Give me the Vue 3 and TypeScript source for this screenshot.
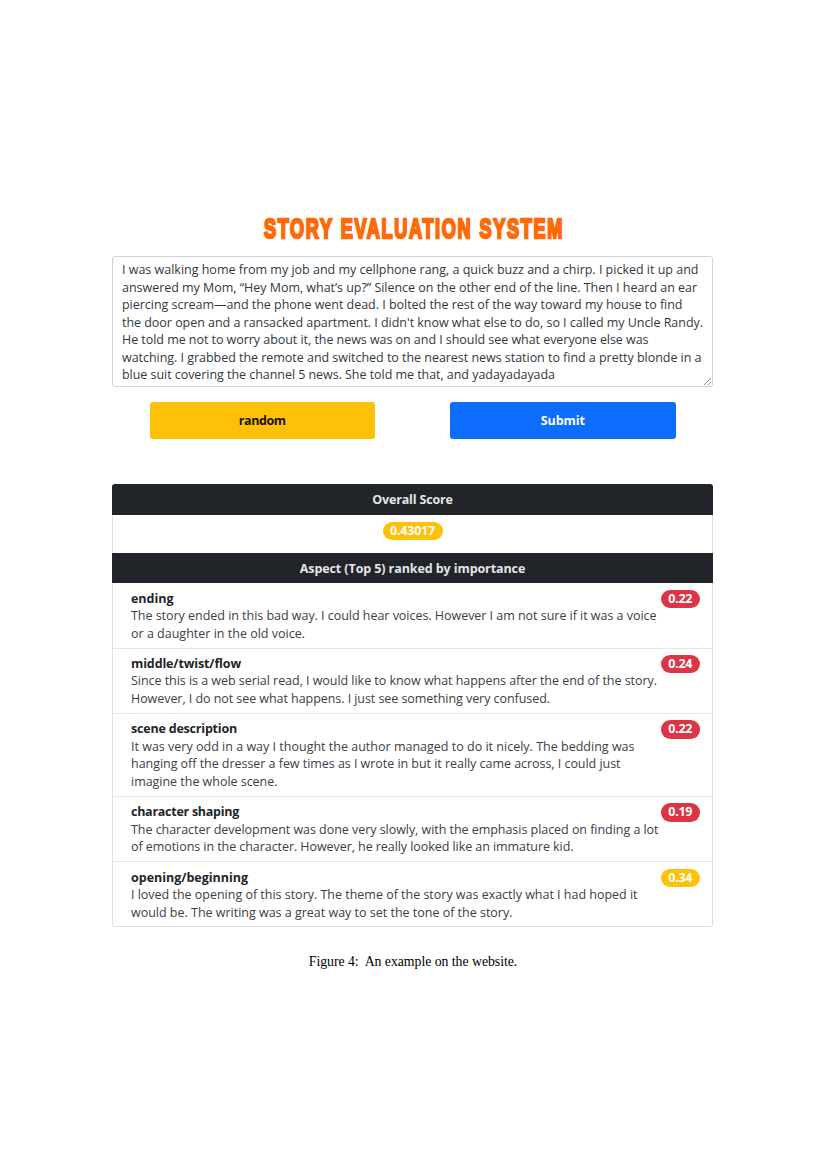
<template>
  <main class="page">
    <svg class="title" width="304" height="30" viewBox="0 0 304 30">
      <text x="3" y="24" textLength="300" lengthAdjust="spacingAndGlyphs">STORY EVALUATION SYSTEM</text>
    </svg>

    <div class="story">
      <div v-for="line in story" :key="line.text" class="line">
        <span v-fit="line.width">{{ line.text }}</span>
      </div>
      <svg class="grip" width="9" height="9" viewBox="0 0 9 9">
        <path d="M1 8L8 1M5 8L8 5" />
      </svg>
    </div>

    <div class="actions">
      <button class="btn btn-warning"><span v-fit="47">random</span></button>
      <button class="btn btn-primary"><span v-fit="44">Submit</span></button>
    </div>

    <section class="results">
      <div class="head"><span v-fit="80.5">Overall Score</span></div>
      <div class="overall">
        <span class="badge badge-wide warning"><span v-fit="45">0.43017</span></span>
      </div>
      <div class="head"><span v-fit="225.5">Aspect (Top 5) ranked by importance</span></div>
      <div v-for="aspect in aspects" :key="aspect.name" class="aspect">
        <div class="body">
          <div class="line name"><span v-fit="aspect.width">{{ aspect.name }}</span></div>
          <div v-for="line in aspect.lines" :key="line.text" class="line">
            <span v-fit="line.width">{{ line.text }}</span>
          </div>
        </div>
        <span class="badge" :class="aspect.level"><span v-fit="24">{{ aspect.score }}</span></span>
      </div>
    </section>

    <p class="caption"><span v-fit="208.5">Figure 4:&nbsp; An example on the website.</span></p>
  </main>
</template>

<script lang="ts" setup>
interface Line {
  text: string
  width: number
}

interface Aspect {
  name: string
  width: number
  score: string
  level: 'danger' | 'warning'
  lines: Line[]
}

// spreads the letters of a line over the given width
const vFit = {
  mounted(el: HTMLElement, binding: { value: number }) {
    const natural = el.getBoundingClientRect().width
    const count = (el.textContent || '').length
    el.style.letterSpacing = `${(binding.value - natural) / count}px`
  }
}

const story: Line[] = [
  { text: 'I was walking home from my job and my cellphone rang, a quick buzz and a chirp. I picked it up and', width: 576.5 },
  { text: 'answered my Mom, “Hey Mom, what’s up?” Silence on the other end of the line. Then I heard an ear', width: 575 },
  { text: 'piercing scream—and the phone went dead. I bolted the rest of the way toward my house to find', width: 560.5 },
  { text: "the door open and a ransacked apartment. I didn't know what else to do, so I called my Uncle Randy.", width: 581 },
  { text: 'He told me not to worry about it, the news was on and I should see what everyone else was', width: 526.5 },
  { text: 'watching. I grabbed the remote and switched to the nearest news station to find a pretty blonde in a', width: 579.5 },
  { text: 'blue suit covering the channel 5 news. She told me that, and yadayadayada', width: 433 }
]

const aspects: Aspect[] = [
  {
    name: 'ending',
    width: 42.5,
    score: '0.22',
    level: 'danger',
    lines: [
      { text: 'The story ended in this bad way. I could hear voices. However I am not sure if it was a voice', width: 525.5 },
      { text: 'or a daughter in the old voice.', width: 174 }
    ]
  },
  {
    name: 'middle/twist/flow',
    width: 110,
    score: '0.24',
    level: 'danger',
    lines: [
      { text: 'Since this is a web serial read, I would like to know what happens after the end of the story.', width: 526 },
      { text: 'However, I do not see what happens. I just see something very confused.', width: 419 }
    ]
  },
  {
    name: 'scene description',
    width: 106,
    score: '0.22',
    level: 'danger',
    lines: [
      { text: 'It was very odd in a way I thought the author managed to do it nicely. The bedding was', width: 503.5 },
      { text: 'hanging off the dresser a few times as I wrote in but it really came across, I could just', width: 489.5 },
      { text: 'imagine the whole scene.', width: 146.5 }
    ]
  },
  {
    name: 'character shaping',
    width: 108,
    score: '0.19',
    level: 'danger',
    lines: [
      { text: 'The character development was done very slowly, with the emphasis placed on finding a lot', width: 527.5 },
      { text: 'of emotions in the character. However, he really looked like an immature kid.', width: 442.5 }
    ]
  },
  {
    name: 'opening/beginning',
    width: 117,
    score: '0.34',
    level: 'warning',
    lines: [
      { text: 'I loved the opening of this story. The theme of the story was exactly what I had hoped it', width: 506.5 },
      { text: 'would be. The writing was a great way to set the tone of the story.', width: 381.5 }
    ]
  }
]
</script>

<style>
body {
  background: #fff;
}
</style>

<style scoped>
.page {
  box-sizing: border-box;
  width: 827px;
  height: 1169px;
  padding: 214px 114px 0 112px;
  overflow: hidden;
  color: #33383d;
  font-family: 'Open Sans', 'Noto Sans', sans-serif;
  font-size: 12.5px;
  line-height: 17.5px;
}

.title {
  display: block;
  margin: 0 auto;
  overflow: visible;
}

.title text {
  fill: #ff6a07;
  stroke: #ff6a07;
  stroke-width: 2.4px;
  font-family: 'Liberation Sans Narrow', 'Liberation Sans', sans-serif;
  font-size: 27.5px;
  font-weight: 700;
  letter-spacing: 2.5px;
  word-spacing: 1px;
}

.story {
  position: relative;
  box-sizing: border-box;
  height: 131px;
  margin-top: 12px;
  padding: 4px 9px;
  border: 1px solid #ced4da;
  border-radius: 3px;
}

.line {
  height: 17.5px;
  white-space: pre;
}

.grip {
  position: absolute;
  right: 0;
  bottom: 0;
}

.grip path {
  fill: none;
  stroke: #777;
  stroke-width: 0.8;
}

.actions {
  display: flex;
  justify-content: space-between;
  margin-top: 15px;
  padding: 0 37.5px;
}

.btn {
  width: 225.5px;
  height: 37px;
  padding: 0;
  border: 0;
  border-radius: 3px;
  font: inherit;
  font-weight: 700;
}

.btn-warning {
  background: #ffc107;
  color: #15130b;
}

.btn-primary {
  background: #0d6efd;
  color: #fff;
}

.results {
  box-sizing: border-box;
  height: 443px;
  margin-top: 45.3px;
  border: 1px solid #dfdfdf;
  border-top: 0;
  border-radius: 3px;
  color: #3b4045;
}

.head {
  height: 30.5px;
  margin: 0 -1px;
  background: #212529;
  color: #e4e5e6;
  font-weight: 700;
  line-height: 32px;
  text-align: center;
}

.head:first-child {
  border-radius: 3px 3px 0 0;
}

.overall {
  display: flex;
  justify-content: center;
  box-sizing: border-box;
  height: 38px;
  padding-top: 7px;
}

.aspect {
  display: flex;
  justify-content: space-between;
  box-sizing: border-box;
  padding: 6.3px 12px 5.6px 18px;
  border-bottom: 1px solid #e6e6e6;
}

.aspect:last-child {
  border-bottom: 0;
}

.body {
  width: 530px;
}

.name {
  color: #212529;
  font-weight: 700;
}

.badge {
  flex: none;
  width: 39.5px;
  height: 18.5px;
  border-radius: 9.25px;
  color: #fff;
  font-weight: 700;
  line-height: 18.5px;
  text-align: center;
}

.badge-wide {
  width: 60px;
}

.danger {
  background: #dc3545;
}

.warning {
  background: #ffc107;
}

.caption {
  margin: 26px 0 0 1px;
  color: #000;
  font-family: 'Liberation Serif', serif;
  font-size: 13.8px;
  text-align: center;
}
</style>
